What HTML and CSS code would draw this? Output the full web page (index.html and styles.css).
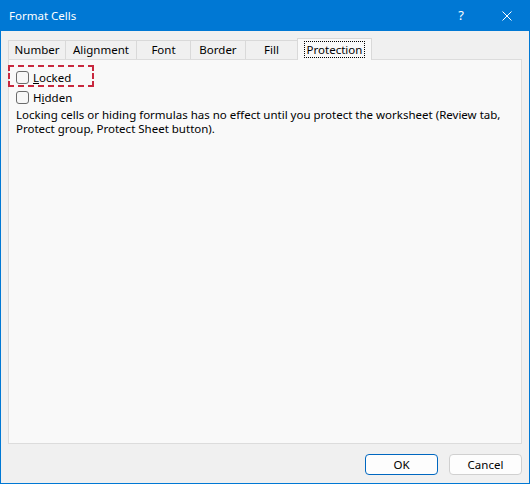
FILE: index.html
```html
<!DOCTYPE html>
<html lang="en">
<head>
  <meta charset="UTF-8">
  <title>Format Cells</title>
  <link rel="stylesheet" href="styles.css">
</head>
<body>
  <div class="window">
    <div class="titlebar">
      <span class="title">Format Cells</span>
      <span class="help">?</span>
      <svg class="close" width="10" height="10" viewBox="0 0 10 10">
        <path d="M0.5 0.5 L9.5 9.5 M9.5 0.5 L0.5 9.5" stroke="#fff" stroke-width="1"/>
      </svg>
    </div>

    <div class="content">
      <!-- tab strip -->
      <div class="tabs">
        <div class="tab tab-number">Number</div>
        <div class="tab tab-alignment">Alignment</div>
        <div class="tab tab-font">Font</div>
        <div class="tab tab-border">Border</div>
        <div class="tab tab-fill">Fill</div>
        <div class="tab tab-protection active"><span class="focus">Protection</span></div>
      </div>

      <div class="panel">
        <label class="check">
          <span class="box"></span>
          <span><u>L</u>ocked</span>
        </label>
        <label class="check">
          <span class="box"></span>
          <span>H<u>i</u>dden</span>
        </label>
        <p class="note">Locking cells or hiding formulas has no effect until you protect the worksheet (Review tab, Protect group, Protect Sheet button).</p>
        <div class="highlight"></div>
      </div>

      <div class="buttons">
        <button class="btn default">OK</button>
        <button class="btn">Cancel</button>
      </div>
    </div>
  </div>
</body>
</html>
```

FILE: styles.css
```css
* {
  box-sizing: border-box;
}

body {
  margin: 0;
  padding: 0;
  font-family: 'Segoe UI', 'Noto Sans', sans-serif;
  font-size: 11.5px;
  color: #000;
  background: #f0f0f0;
}

.window {
  width: 530px;
  height: 484px;
  border: 1px solid #0078d4;
  border-top: none;
  background: #f0f0f0;
  display: flex;
  flex-direction: column;
}

.titlebar {
  height: 31px;
  margin: 0 -1px;
  background: #0078d4;
  color: #fff;
  display: flex;
  align-items: center;
  padding: 0 18px 0 9px;
}

.title {
  flex: 1;
  padding-bottom: 1px;
}

.help {
  font-size: 13px;
  margin-right: 38px;
  padding-bottom: 1px;
}

.close {
  display: block;
}

.content {
  flex: 1;
  display: flex;
  flex-direction: column;
  padding: 7px 7px 0 7px;
}

.tabs {
  display: flex;
  align-items: flex-end;
  height: 21px;
}

.tab {
  height: 19px;
  border: 1px solid #d9d9d9;
  border-bottom: none;
  margin-right: -1px;
  text-align: center;
  line-height: 18px;
  background: #f0f0f0;
}

.tab-number { width: 58px; }
.tab-alignment { width: 72px; }
.tab-font { width: 55px; }
.tab-border { width: 56px; }
.tab-fill { width: 53px; }

.tab-protection {
  width: 75px;
  height: 22px;
  margin-bottom: -1px;
  position: relative;
  z-index: 1;
  background: #f9f9f9;
  padding-top: 2px;
  line-height: 15px;
}

.focus {
  display: inline-block;
  padding: 0 2px;
  border: 1px dotted #000;
}

.panel {
  position: relative;
  height: 385px;
  background: #f9f9f9;
  border: 1px solid #dcdcdc;
  padding: 8px 7px 0 7px;
}

.check {
  display: flex;
  align-items: center;
  height: 19px;
  gap: 4px;
  margin-bottom: 1px;
}

.box {
  width: 13px;
  height: 13px;
  border: 1px solid #6b6b6b;
  border-radius: 3px;
  background: #f7f7f7;
}

.note {
  margin: 1px 0 0 0;
  line-height: 14px;
}

.highlight {
  position: absolute;
  left: -1px;
  top: 5px;
  width: 86px;
  height: 22px;
  border: 2px dashed #c8283e;
}

.buttons {
  display: flex;
  justify-content: flex-end;
  gap: 11px;
  margin-top: 10px;
}

.btn {
  width: 73px;
  height: 21px;
  font-family: 'Segoe UI', 'Noto Sans', sans-serif;
  font-size: 11.5px;
  background: #fdfdfd;
  border: 1px solid #d0d0d0;
  border-radius: 4px;
  padding: 0;
  color: #000;
}

.btn.default {
  border-color: #0067c0;
}
```
